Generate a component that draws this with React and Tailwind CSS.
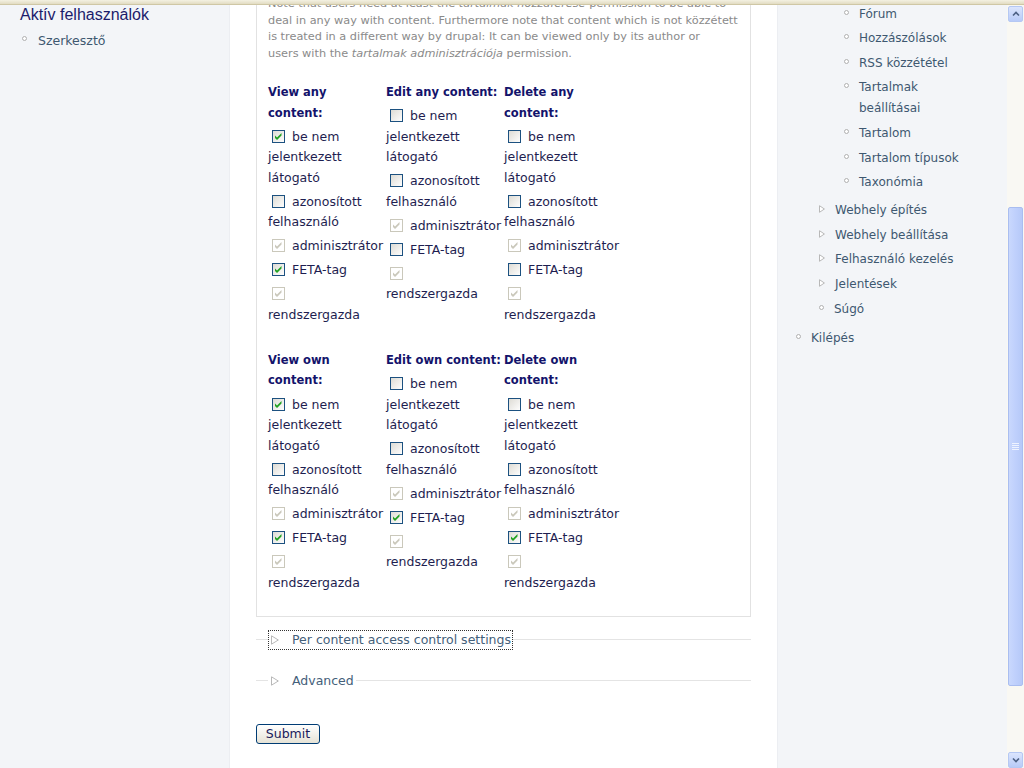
import React from 'react';

// Drupal admin page, permissions fieldset scrolled to the bottom

const GROUPS = [
  [
    { head: ['View any', 'content:'], states: ['on', 'off', 'dis', 'on', 'dis'] },
    { head: ['Edit any content:'], states: ['off', 'off', 'dis', 'off', 'dis'] },
    { head: ['Delete any', 'content:'], states: ['off', 'off', 'dis', 'off', 'dis'] },
  ],
  [
    { head: ['View own', 'content:'], states: ['on', 'off', 'dis', 'on', 'dis'] },
    { head: ['Edit own content:'], states: ['off', 'off', 'dis', 'on', 'dis'] },
    { head: ['Delete own', 'content:'], states: ['off', 'off', 'dis', 'on', 'dis'] },
  ],
];

const ROLES = [
  ['be nem', 'jelentkezett', 'látogató'],
  ['azonosított', 'felhasználó'],
  ['adminisztrátor'],
  ['FETA-tag'],
  [null, 'rendszergazda'],
];

const MENU = [
  { indent: 'pl-[66px]', bullet: 'circle', lines: ['Fórum'] },
  { indent: 'pl-[66px]', bullet: 'circle', lines: ['Hozzászólások'] },
  { indent: 'pl-[66px]', bullet: 'circle', lines: ['RSS közzététel'] },
  { indent: 'pl-[66px]', bullet: 'circle', lines: ['Tartalmak', 'beállításai'] },
  { indent: 'pl-[66px]', bullet: 'circle', lines: ['Tartalom'] },
  { indent: 'pl-[66px]', bullet: 'circle', lines: ['Tartalom típusok'] },
  { indent: 'pl-[66px]', bullet: 'circle', lines: ['Taxonómia'], after: 'mb-[3.5px]' },
  { indent: 'pl-[41px]', bullet: 'tri', lines: ['Webhely építés'] },
  { indent: 'pl-[41px]', bullet: 'tri', lines: ['Webhely beállítása'] },
  { indent: 'pl-[41px]', bullet: 'tri', lines: ['Felhasználó kezelés'] },
  { indent: 'pl-[41px]', bullet: 'tri', lines: ['Jelentések'] },
  { indent: 'pl-[41px]', bullet: 'circle', lines: ['Súgó'], after: 'mb-[4.5px]' },
  { indent: 'pl-[18px]', bullet: 'circle', lines: ['Kilépés'] },
];

function Box({ state }) {
  if (state === 'dis') {
    return (
      <svg width="13" height="13" viewBox="0 0 13 13" className="shrink-0 block">
        <rect x="0.5" y="0.5" width="12" height="12" fill="#ffffff" stroke="#cac8bb" />
        <path d="M3 5.5 L5 7.5 L9.5 3 L9.5 5.5 L5 10 L3 8 Z" fill="#cac8bb" />
      </svg>
    );
  }
  return (
    <svg width="13" height="13" viewBox="0 0 13 13" className="shrink-0 block">
      <defs>
        <linearGradient id="xpbox" x1="0" y1="0" x2="1" y2="1">
          <stop offset="0" stopColor="#dcdad3" />
          <stop offset="1" stopColor="#ffffff" />
        </linearGradient>
      </defs>
      <rect x="0.5" y="0.5" width="12" height="12" fill="url(#xpbox)" stroke="#1c5180" />
      {state === 'on' && <path d="M3 5.5 L5 7.5 L9.5 3 L9.5 5.5 L5 10 L3 8 Z" fill="#21a121" />}
    </svg>
  );
}

function Circle() {
  return <span className="mt-[6px] w-[5px] h-[5px] rounded-full border border-[#b0b0b0] bg-white shrink-0" />;
}

function Tri({ big }) {
  return big ? (
    <svg width="8" height="10" viewBox="0 0 8 10" className="shrink-0 block">
      <path d="M0.5 0.8 L7.3 5 L0.5 9.2 Z" fill="#fff" stroke="#b8b8b8" />
    </svg>
  ) : (
    <svg width="6" height="8" viewBox="0 0 6 8" className="shrink-0 block mt-[5px]">
      <path d="M0.5 0.7 L5.4 4 L0.5 7.3 Z" fill="#fff" stroke="#b8b8b8" />
    </svg>
  );
}

function Column({ col }) {
  return (
    <div className="w-[118px] shrink-0 leading-[20.5px]">
      {col.head.map((h) => (
        <div key={h} className="font-bold text-[11.5px] text-[#13136b] whitespace-nowrap">{h}</div>
      ))}
      {ROLES.map((lines, i) => (
        <div key={i} className="pt-[3.6px] text-[12.5px] text-[#1e1e50] whitespace-nowrap">
          <div className="flex items-start h-[20.5px]">
            <span className="ml-[4px] mr-[7px] mt-[3px]">
              <Box state={col.states[i]} />
            </span>
            {lines[0] && <span>{lines[0]}</span>}
          </div>
          {lines.slice(1).map((l) => (
            <div key={l}>{l}</div>
          ))}
        </div>
      ))}
    </div>
  );
}

function Legend({ label, focused, className }) {
  return (
    <div className={`flex items-center h-[20px] ${className}`}>
      <div className="w-[12px] h-px bg-[#e4e4e4]" />
      <div
        className={`h-[20px] flex items-center pl-[1.5px] pr-[1px] border ${
          focused ? 'border-dotted border-[#333]' : 'border-transparent'
        }`}
      >
        <Tri big />
        <span className="ml-[13.5px] text-[12.5px] text-[#44607a] whitespace-nowrap">{label}</span>
      </div>
      <div className="flex-1 h-px bg-[#e4e4e4]" />
    </div>
  );
}

function ScrollBtn({ down }) {
  return (
    <div className="h-[16px] mx-[1px] rounded-[2px] border border-[#b5c8f3] bg-gradient-to-b from-[#dbe5fd] to-[#b8cbf8] flex items-center justify-center">
      <svg width="8" height="6" viewBox="0 0 8 6">
        <path d={down ? 'M1 1.5 L4 4.5 L7 1.5' : 'M1 4.5 L4 1.5 L7 4.5'} fill="none" stroke="#4d6185" strokeWidth="1.6" />
      </svg>
    </div>
  );
}

export default function App() {
  return (
    <div className="relative w-[1024px] h-[768px] overflow-hidden bg-white flex font-['DejaVu_Sans',Verdana,sans-serif]">
      {/* window frame edge */}
      <div className="absolute top-0 left-0 right-0 h-[5px] bg-gradient-to-b from-[#f4f1e2] to-[#e2dcc2] border-b border-[#cfc7a5]" />

      {/* left sidebar */}
      <div className="w-[230px] shrink-0 bg-[#f3f5f8] border-r border-[#eceef2] pt-[5px] pl-[20px]">
        <h2 className="font-['Liberation_Sans',Arial,sans-serif] text-[16px] leading-[20px] text-[#1c1c6b]">
          Aktív felhasználók
        </h2>
        <div className="mt-[1px] pt-[3.5px] leading-[21px] flex items-start pl-[2px]">
          <Circle />
          <span className="ml-[11px] text-[12.5px] text-[#3e5870]">Szerkesztő</span>
        </div>
      </div>

      {/* main content */}
      <div className="w-[547px] shrink-0 px-[26px]">
        <div className="-mt-[4px] border-x border-b border-[#e2e2e2] pl-[11px] pb-[22.5px]">
          <div className="text-[11.3px] leading-[16.5px] text-[#8a8a8a] whitespace-nowrap">
            <div>
              Note that users need at least the <em>tartalmak hozzáférése</em> permission to be able to
            </div>
            <div>deal in any way with content. Furthermore note that content which is not közzétett</div>
            <div>is treated in a different way by drupal: It can be viewed only by its author or</div>
            <div>
              users with the <em>tartalmak adminisztrációja</em> permission.
            </div>
          </div>
          {GROUPS.map((group, gi) => (
            <div key={gi} className={`flex ${gi === 0 ? 'mt-[20px]' : 'mt-[24.5px]'}`}>
              {group.map((col, ci) => (
                <Column key={ci} col={col} />
              ))}
            </div>
          ))}
        </div>

        <Legend label="Per content access control settings" focused className="mt-[13px]" />
        <Legend label="Advanced" className="mt-[21px]" />

        <button className="mt-[33px] w-[64px] h-[20px] rounded-[3px] border border-[#003c74] bg-gradient-to-b from-[#ffffff] to-[#e6e3d6] text-[12.5px] text-[#1a1a5a] leading-none">
          Submit
        </button>
      </div>

      {/* right sidebar */}
      <div className="w-[230px] shrink-0 bg-[#f3f5f8] border-l border-[#eceef2]">
        {MENU.map((m) => (
          <div key={m.lines[0]} className={`flex items-start pt-[3.6px] leading-[21px] ${m.indent} ${m.after || ''}`}>
            {m.bullet === 'circle' ? <Circle /> : <Tri />}
            <div className="ml-[10px] text-[12px] text-[#3e5870] whitespace-nowrap">
              {m.lines.map((l) => (
                <div key={l}>{l}</div>
              ))}
            </div>
          </div>
        ))}
      </div>

      {/* browser scrollbar */}
      <div className="w-[17px] shrink-0 h-full bg-[#f9f8f3] flex flex-col pt-[6px]">
        <ScrollBtn />
        <div className="h-[185px]" />
        <div className="h-[479px] mx-[1px] rounded-[2px] border border-[#a9bdf0] bg-gradient-to-r from-[#c9d8fd] via-[#bfd0fc] to-[#b6c9f8] flex flex-col items-center justify-center gap-[1px]">
          <div className="w-[7px] h-px bg-[#eef3ff]" />
          <div className="w-[7px] h-px bg-[#eef3ff]" />
          <div className="w-[7px] h-px bg-[#eef3ff]" />
          <div className="w-[7px] h-px bg-[#eef3ff]" />
        </div>
        <div className="flex-1" />
        <ScrollBtn down />
      </div>
    </div>
  );
}
